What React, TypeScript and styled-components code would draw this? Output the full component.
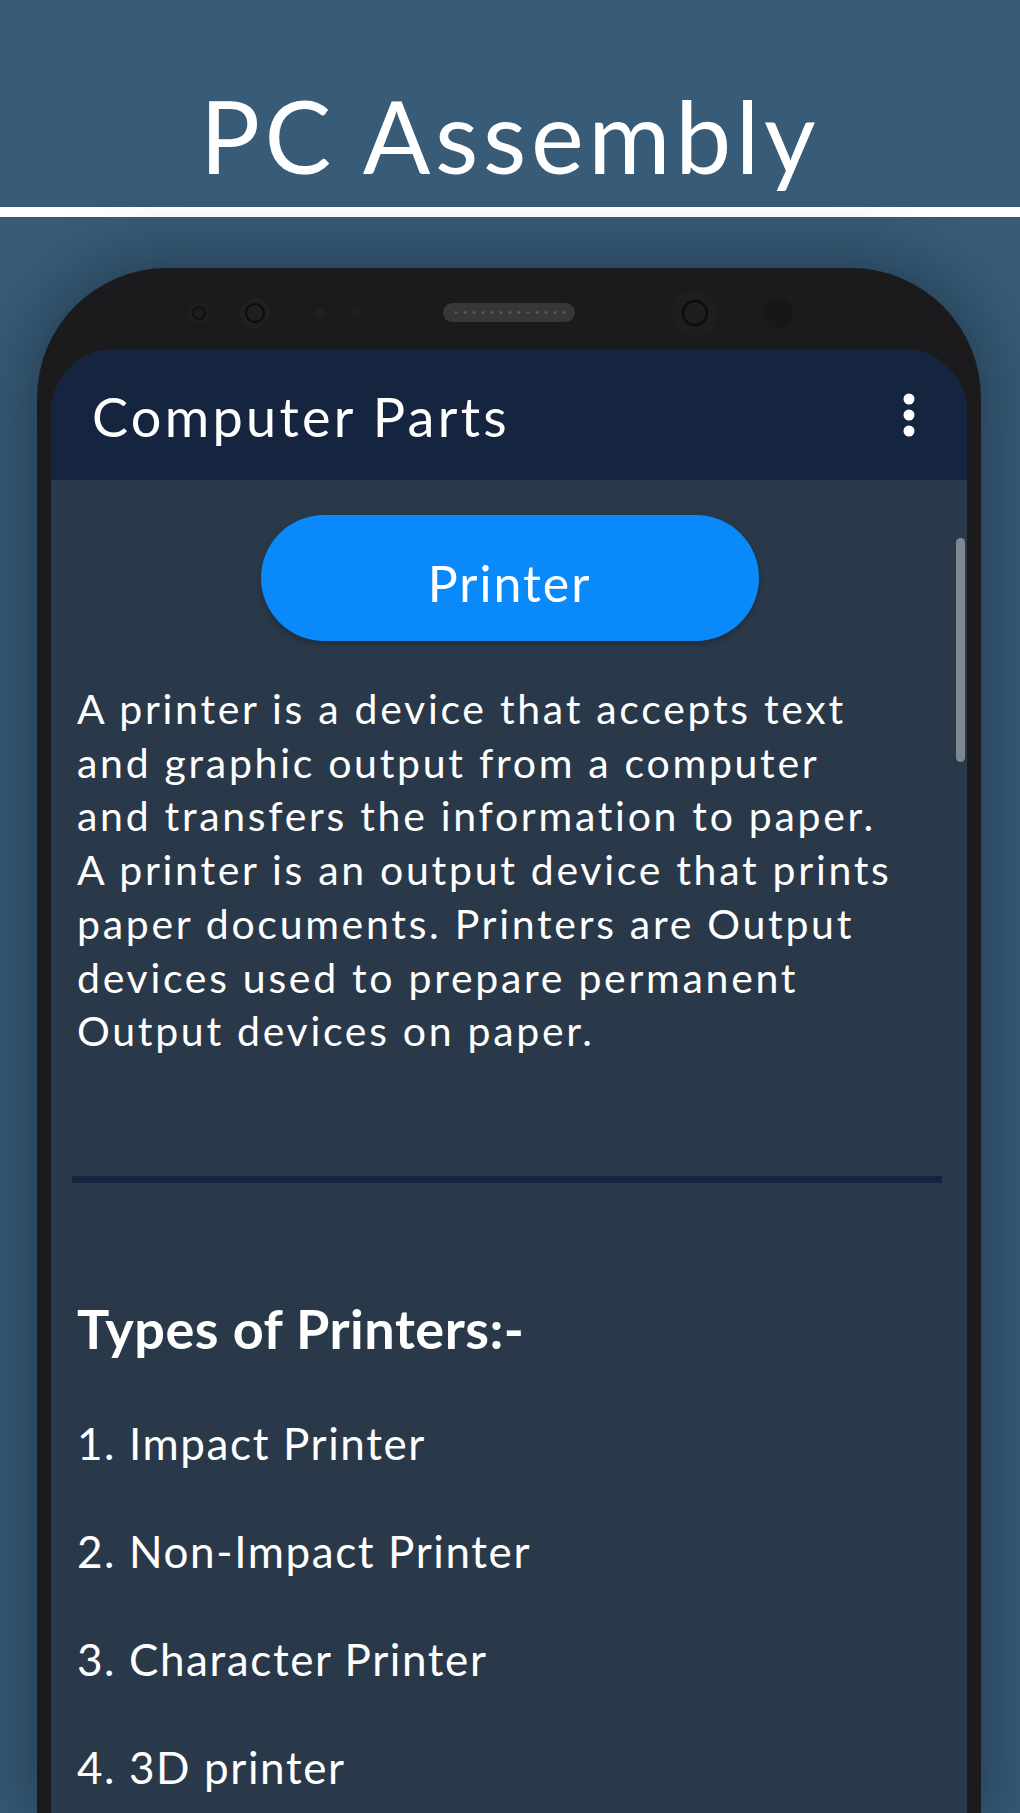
import React from 'react';
import styled, {createGlobalStyle} from 'styled-components';

const GlobalStyle = createGlobalStyle`
    html, body {
        margin: 0;
        padding: 0;
        background: #385b77;
        overflow: hidden;
    }
    * {
        box-sizing: border-box;
    }
`;

const Page = styled.div`
    width: 1020px;
    height: 1813px;
    overflow: hidden;
    display: flex;
    flex-direction: column;
    background: #385b77;
    font-family: Lato, "Open Sans", sans-serif;
    color: #ffffff;
`;

const Header = styled.header`
    padding-top: 75px;
    text-align: center;
`;

const Title = styled.h1`
    margin: 0;
    font-size: 100px;
    line-height: 120px;
    font-weight: 400;
    letter-spacing: 4.6px;
`;

const Rule = styled.div`
    height: 10px;
    margin-top: 12px;
    background: #ffffff;
`;

const PhoneWrap = styled.div`
    flex: 1;
    min-height: 0;
    padding: 51px 39px 0 37px;
`;

const Phone = styled.div`
    height: 100%;
    display: flex;
    flex-direction: column;
    background: #1b1b1e;
    border-radius: 130px 130px 0 0;
    box-shadow: 0 0 60px 14px rgba(10, 20, 30, 0.35);
`;

const Bezel = styled.svg`
    display: block;
    flex-shrink: 0;
`;

const Screen = styled.div`
    position: relative;
    flex: 1;
    margin: 0 14px;
    display: flex;
    flex-direction: column;
    background: #2a3949;
    border-radius: 64px 64px 0 0;
    overflow: hidden;
`;

const AppBar = styled.div`
    height: 131px;
    flex-shrink: 0;
    display: flex;
    align-items: center;
    justify-content: space-between;
    padding: 0 52px 0 41px;
    background: #16253f;
`;

const AppTitle = styled.span`
    font-size: 54px;
    line-height: 64px;
    letter-spacing: 3.3px;
    padding-top: 4px;
`;

const Content = styled.div`
    display: flex;
    flex-direction: column;
    padding: 35px 25px 0 26px;
`;

const PillButton = styled.button`
    align-self: center;
    width: 498px;
    height: 126px;
    padding: 10px 0 0;
    border: none;
    border-radius: 63px;
    background: #0a89fb;
    color: #ffffff;
    font-family: Lato, "Open Sans", sans-serif;
    font-size: 50px;
    letter-spacing: 2px;
    box-shadow: 0 3px 6px rgba(0, 0, 0, 0.25);
`;

const Paragraph = styled.p`
    margin: 41px 0 0;
    font-size: 41px;
    line-height: 53.7px;
    letter-spacing: 2.7px;
    white-space: nowrap;
`;

const Divider = styled.hr`
    margin: 118px 0 0 -5px;
    height: 7px;
    border: none;
    background: #16253f;
`;

const Heading = styled.h2`
    margin: 114px 0 0;
    font-size: 54px;
    line-height: 64px;
    font-weight: 700;
    letter-spacing: 0.5px;
`;

const TypeList = styled.ol`
    list-style: none;
    margin: 28px 0 0;
    padding: 0;
`;

const TypeItem = styled.li`
    font-size: 44px;
    line-height: 108px;
    letter-spacing: 1.6px;
`;

const ScrollThumb = styled.div`
    position: absolute;
    right: 2px;
    top: 189px;
    width: 9px;
    height: 224px;
    border-radius: 5px;
    background: #7c8792;
`;

const speakerDots = Array.from({length: 13}, (_, i) => 419 + i * 9);

const types = ['1. Impact Printer', '2. Non-Impact Printer', '3. Character Printer', '4. 3D printer'];

const App = () => {
    return (
        <>
            <GlobalStyle/>
            <Page>
                <Header>
                    <Title>PC Assembly</Title>
                </Header>
                <Rule/>
                <PhoneWrap>
                    <Phone>
                        <Bezel width="944" height="81" viewBox="0 0 944 81">
                            <circle cx="162" cy="45" r="11" fill="#1e1e20"/>
                            <circle cx="162" cy="45" r="6" fill="none" stroke="#0c0c0d" strokeWidth="1.5"/>
                            <circle cx="218" cy="45" r="15" fill="#1f1f21"/>
                            <circle cx="218" cy="45" r="9" fill="none" stroke="#0b0b0c" strokeWidth="2"/>
                            <circle cx="283" cy="45" r="5" fill="#202023"/>
                            <circle cx="320" cy="45" r="5" fill="#202023"/>
                            <rect x="406" y="35" width="132" height="19" rx="9.5" fill="#37373a"/>
                            {speakerDots.map((x) => (
                                <circle key={x} cx={x} cy="44.5" r="1.6" fill="#58585c"/>
                            ))}
                            <circle cx="658" cy="45" r="23" fill="#1e1e20"/>
                            <circle cx="658" cy="45" r="12" fill="none" stroke="#0c0c0d" strokeWidth="2.5"/>
                            <circle cx="741" cy="45" r="15" fill="#17171a"/>
                        </Bezel>
                        <Screen>
                            <AppBar>
                                <AppTitle>Computer Parts</AppTitle>
                                <svg width="12" height="44" viewBox="0 0 12 44">
                                    <circle cx="6" cy="6" r="5.5" fill="#ffffff"/>
                                    <circle cx="6" cy="22" r="5.5" fill="#ffffff"/>
                                    <circle cx="6" cy="38" r="5.5" fill="#ffffff"/>
                                </svg>
                            </AppBar>
                            <Content>
                                <PillButton>Printer</PillButton>
                                <Paragraph>
                                    A printer is a device that accepts text<br/>
                                    and graphic output from a computer<br/>
                                    and transfers the information to paper.<br/>
                                    A printer is an output device that prints<br/>
                                    paper documents. Printers are Output<br/>
                                    devices used to prepare permanent<br/>
                                    Output devices on paper.
                                </Paragraph>
                                <Divider/>
                                <Heading>Types of Printers:-</Heading>
                                <TypeList>
                                    {types.map((t) => (
                                        <TypeItem key={t}>{t}</TypeItem>
                                    ))}
                                </TypeList>
                            </Content>
                            <ScrollThumb/>
                        </Screen>
                    </Phone>
                </PhoneWrap>
            </Page>
        </>
    );
};

export default App;
